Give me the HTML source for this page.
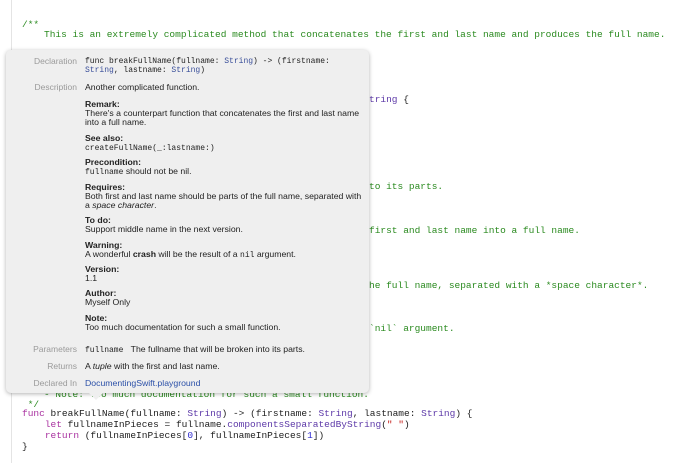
<!DOCTYPE html>
<html><head><style>
body{margin:0;width:680px;height:463px;background:#fff;position:relative;overflow:hidden;font-family:"Liberation Sans",sans-serif}
.gut{position:absolute;left:11px;top:0;width:1px;height:463px;background:#e4e4e4}
.c{position:absolute;font-family:"Liberation Mono",monospace;font-size:9.5px;white-space:pre;color:#1d1d1d;line-height:11px}
.g{color:#2a8a1f}.k{color:#a932a0}.t{color:#5d39a8}.n{color:#2c28cf}
.pop{position:absolute;left:6px;top:50px;width:363px;height:343px;background:#efefef;border-radius:5px;box-shadow:0 1px 4px rgba(0,0,0,.3)}
.arrow{position:absolute;left:88px;top:392px;width:0;height:0;border-left:8px solid transparent;border-right:8px solid transparent;border-top:8px solid #efefef}
.p{position:absolute;font-size:8.7px;line-height:9px;color:#222;white-space:nowrap}
.l{position:absolute;font-size:8.5px;line-height:9px;color:#9a9a9a;right:603px;text-align:right;white-space:nowrap}
.m{font-family:"Liberation Mono",monospace;font-size:8px}
b{font-weight:bold}
</style></head><body>
<div class="gut"></div>
<div class="c g" style="left:22px;top:19px">/**</div>
<div class="c g" style="left:44px;top:29px">This is an extremely complicated method that concatenates the first and last name and produces the full name.</div>
<div class="c" style="left:369px;top:94px"><span class="t">tring</span> {</div>
<div class="c g" style="left:369px;top:181px">to its parts.</div>
<div class="c g" style="left:369px;top:225px">first and last name into a full name.</div>
<div class="c g" style="left:369px;top:280px">he full name, separated with a *space character*.</div>
<div class="c g" style="left:369px;top:323px">`nil` argument.</div>
<div class="c g" style="left:44px;top:389px">- Note: Too much documentation for such a small function.</div>
<div class="c g" style="left:22px;top:399px"> */</div>
<div class="c" style="left:22px;top:408px"><span class="k">func</span> breakFullName(fullname: <span class="t">String</span>) -&gt; (firstname: <span class="t">String</span>, lastname: <span class="t">String</span>) {</div>
<div class="c" style="left:22px;top:419px">    <span class="k">let</span> fullnameInPieces = fullname.<span class="t">componentsSeparatedByString</span>(<span style="color:#c41a16">" "</span>)</div>
<div class="c" style="left:22px;top:430px">    <span class="k">return</span> (fullnameInPieces[<span class="n">0</span>], fullnameInPieces[<span class="n">1</span>])</div>
<div class="c" style="left:22px;top:441px">}</div>

<div class="pop"></div>
<div class="arrow"></div>
<div class="l" style="top:57px">Declaration</div>
<div class="p m" style="left:85px;top:57px">func breakFullName(fullname: <span style="color:#3a4f9a">String</span>) -&gt; (firstname:<br><span style="color:#3a4f9a">String</span>, lastname: <span style="color:#3a4f9a">String</span>)</div>
<div class="l" style="top:83px">Description</div>
<div class="p" style="left:85px;top:83px">Another complicated function.</div>
<div class="p" style="left:85px;top:100px"><b>Remark:</b><br>There's a counterpart function that concatenates the first and last name<br>into a full name.</div>
<div class="p" style="left:85px;top:134px"><b>See also:</b><br><span class="m">createFullName(_:lastname:)</span></div>
<div class="p" style="left:85px;top:158px"><b>Precondition:</b><br><span class="m">fullname</span> should not be nil.</div>
<div class="p" style="left:85px;top:183px"><b>Requires:</b><br>Both first and last name should be parts of the full name, separated with<br>a <i>space character</i>.</div>
<div class="p" style="left:85px;top:216px"><b>To do:</b><br>Support middle name in the next version.</div>
<div class="p" style="left:85px;top:241px"><b>Warning:</b><br>A wonderful <b>crash</b> will be the result of a <span class="m">nil</span> argument.</div>
<div class="p" style="left:85px;top:265px"><b>Version:</b><br>1.1</div>
<div class="p" style="left:85px;top:289px"><b>Author:</b><br>Myself Only</div>
<div class="p" style="left:85px;top:314px"><b>Note:</b><br>Too much documentation for such a small function.</div>
<div class="l" style="top:345px">Parameters</div>
<div class="p" style="left:85px;top:345px"><span class="m">fullname</span>&nbsp;&nbsp;&nbsp;The fullname that will be broken into its parts.</div>
<div class="l" style="top:362px">Returns</div>
<div class="p" style="left:85px;top:362px">A <i>tuple</i> with the first and last name.</div>
<div class="l" style="top:379px">Declared In</div>
<div class="p" style="left:85px;top:379px;color:#2b50a8">DocumentingSwift.playground</div>
</body></html>
